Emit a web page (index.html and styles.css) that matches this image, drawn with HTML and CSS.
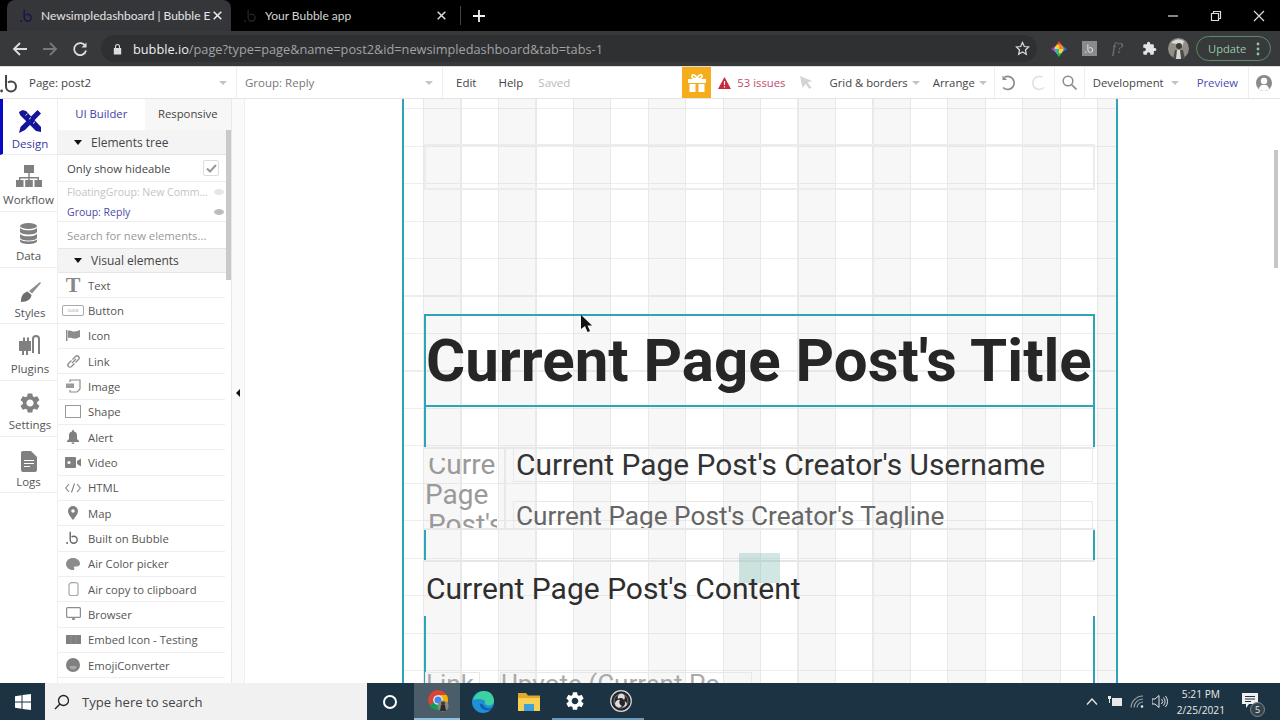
FILE: index.html
```html
<!DOCTYPE html>
<html>
<head>
  <meta charset="utf-8">
  <title>Newsimpledashboard | Bubble Editor</title>
  <link rel="stylesheet" href="styles.css">
</head>
<body>

<svg class="defs" width="0" height="0">
  <symbol id="gear" viewBox="0 0 24 24"><path d="M19.14 12.94c.04-.3.06-.61.06-.94 0-.32-.02-.64-.07-.94l2.03-1.58a.49.49 0 0 0 .12-.61l-1.92-3.32a.488.488 0 0 0-.59-.22l-2.39.96c-.5-.38-1.03-.7-1.62-.94l-.36-2.54a.484.484 0 0 0-.48-.41h-3.84c-.24 0-.43.17-.47.41l-.36 2.54c-.59.24-1.13.57-1.62.94l-2.39-.96c-.22-.08-.47 0-.59.22L2.74 8.87c-.12.21-.08.47.12.61l2.03 1.58c-.05.3-.09.63-.09.94s.02.64.07.94l-2.03 1.58a.49.49 0 0 0-.12.61l1.92 3.32c.12.22.37.29.59.22l2.39-.96c.5.38 1.03.7 1.62.94l.36 2.54c.05.24.24.41.48.41h3.84c.24 0 .44-.17.47-.41l.36-2.54c.59-.24 1.13-.56 1.62-.94l2.39.96c.22.08.47 0 .59-.22l1.92-3.32c.12-.22.07-.47-.12-.61l-2.01-1.58zM12 15.6c-1.98 0-3.6-1.62-3.6-3.6s1.62-3.6 3.6-3.6 3.6 1.62 3.6 3.6-1.62 3.6-3.6 3.6z"/></symbol>
  <symbol id="blogo" viewBox="0 0 20 20"><path d="M6 1v11.5a5 5 0 1 0 5-5 5 5 0 0 0-3 1" fill="none" stroke="currentColor" stroke-width="2"/><circle cx="1.6" cy="17" r="1.4" fill="currentColor"/></symbol>
</svg>

<div class="tabstrip">
  <div class="tab tab-active">
    <svg class="favicon" width="14" height="16" viewBox="0 0 20 20" color="#15154a"><use href="#blogo"/></svg>
    <span class="tab-title">Newsimpledashboard | Bubble E</span>
    <svg class="tab-close" width="9" height="9" viewBox="0 0 9 9"><path d="M.7.7l7.600 7.600M8.300.7L.7 8.300" stroke="#eee" stroke-width="1.500"/></svg>
  </div>
  <div class="tab">
    <svg class="favicon" width="14" height="16" viewBox="0 0 20 20" color="#222"><use href="#blogo"/></svg>
    <span class="tab-title">Your Bubble app</span>
    <svg class="tab-close" width="9" height="9" viewBox="0 0 9 9"><path d="M.7.7l7.600 7.600M8.300.7L.7 8.300" stroke="#ddd" stroke-width="1.500"/></svg>
  </div>
  <span class="tab-sep"></span>
  <svg class="new-tab" width="12" height="12" viewBox="0 0 12 12"><path d="M6 0v12M0 6h12" stroke="#f2f2f2" stroke-width="1.8"/></svg>
  <div class="window-btns">
    <svg width="12" height="12" viewBox="0 0 12 12"><path d="M1 6h10" stroke="#ddd" stroke-width="1.2"/></svg>
    <svg width="12" height="12" viewBox="0 0 12 12"><path d="M1.500 3.500h7v7h-7zM3.500 3.500v-2h7v7h-2" fill="none" stroke="#ddd" stroke-width="1.2"/></svg>
    <svg width="12" height="12" viewBox="0 0 12 12"><path d="M1 1l10 10M11 1L1 11" stroke="#ddd" stroke-width="1.2"/></svg>
  </div>
</div>

<div class="toolbar">
  <svg class="nav-btn" width="16" height="16" viewBox="0 0 16 16"><path d="M15 8H2M8 2L2 8l6 6" fill="none" stroke="#ddd" stroke-width="1.8"/></svg>
  <svg class="nav-btn" width="16" height="16" viewBox="0 0 16 16"><path d="M1 8h13M8 2l6 6-6 6" fill="none" stroke="#77787a" stroke-width="1.8"/></svg>
  <svg class="nav-btn" width="16" height="16" viewBox="0 0 16 16"><path d="M13.400 5.200A6 6 0 1 0 14 9.500" fill="none" stroke="#ddd" stroke-width="1.8"/><path d="M14.500 1.500v5h-5z" fill="#ddd"/></svg>
  <div class="omnibox">
    <svg width="9" height="12" viewBox="0 0 9 12"><path d="M2 5V3.400a2.500 2.500 0 0 1 5 0V5h1.200v6.500H.8V5zM3 5h3V3.400a1.500 1.500 0 0 0-3 0z" fill="#ddd"/></svg>
    <span class="url"><b>bubble.io</b>/page?type=page&amp;name=post2&amp;id=newsimpledashboard&amp;tab=tabs-1</span>
    <svg class="star" width="15" height="15" viewBox="0 0 24 24"><path d="M12 2.500l2.900 6.300 6.900.8-5.100 4.700 1.400 6.800-6.100-3.400-6.100 3.400 1.400-6.800-5.100-4.700 6.900-.8z" fill="none" stroke="#ddd" stroke-width="2"/></svg>
  </div>
  <div class="extensions">
    <svg width="16" height="16" viewBox="0 0 16 16"><path d="M8 0l3 4H5z" fill="#e8382f"/><path d="M16 8l-4 3V5z" fill="#2d6de0"/><path d="M8 16l-3-4h6z" fill="#22b14c"/><path d="M0 8l4-3v6z" fill="#a033d0"/><circle cx="8" cy="8" r="4.500" fill="#f6d52c"/><path d="M8 3.500a4.500 4.500 0 0 1 4.500 4.500H8z" fill="#f08a24"/><path d="M8 8v4.500A4.500 4.500 0 0 1 3.500 8z" fill="#21b5c7"/></svg>
    <svg width="15" height="15" viewBox="0 0 15 15" color="#e6e6e6"><rect width="15" height="15" fill="#8b8b8b"/><g transform="translate(3 3) scale(.48)"><use href="#blogo" width="20" height="20"/></g></svg>
    <span class="ext-fx">f?</span>
    <svg width="15" height="15" viewBox="0 0 24 24"><path d="M20.500 11H19V7a2 2 0 0 0-2-2h-4V3.500a2.500 2.500 0 0 0-5 0V5H4a2 2 0 0 0-2 2v3.800h1.500a2.700 2.700 0 0 1 0 5.400H2V20a2 2 0 0 0 2 2h3.800v-1.500a2.700 2.700 0 0 1 5.400 0V22H17a2 2 0 0 0 2-2v-4h1.500a2.500 2.500 0 0 0 0-5z" fill="#e4e4e4"/></svg>
    <svg class="ext-avatar" width="21" height="21" viewBox="0 0 21 21"><circle cx="10.500" cy="10.500" r="10.500" fill="#8f8f88"/><path d="M3 5a10 10 0 0 1 13-2l-2 6-5-3z" fill="#dcdcd5"/><circle cx="11" cy="8" r="3" fill="#3f3a36"/><path d="M5 21l2-9h8l2 9z" fill="#4d4a46"/><path d="M9 12h3l1 9H8z" fill="#d8d8d2"/></svg>
  </div>
  <div class="update-pill">
    <span>Update</span>
    <svg width="4" height="14" viewBox="0 0 4 14"><circle cx="2" cy="2" r="1.400" fill="#8ec9a5"/><circle cx="2" cy="7" r="1.400" fill="#8ec9a5"/><circle cx="2" cy="12" r="1.400" fill="#8ec9a5"/></svg>
  </div>
</div>

<div class="appbar">
  <svg class="app-logo" width="20" height="20" viewBox="0 0 20 20" color="#444"><use href="#blogo"/></svg>
  <div class="picker picker-page"><span>Page: post2</span><i class="caret"></i></div>
  <div class="picker picker-group"><span class="muted">Group: Reply</span><i class="caret"></i></div>
  <span class="menu menu-edit">Edit</span>
  <span class="menu menu-help">Help</span>
  <span class="menu saved">Saved</span>
  <div class="appbar-right">
    <div class="gift">
      <svg width="20" height="20" viewBox="0 0 20 20"><path d="M1 6h18v4H1zM2.500 11h6v8h-6zM11.500 11h6v8h-6z" fill="#fff"/><path d="M10 6C7 6 4.500 5 5 2.800S9 2 10 6c1-4 4.500-5.400 5-3.200S13 6 10 6z" fill="none" stroke="#fff" stroke-width="1.700"/></svg>
    </div>
    <div class="issues">
      <svg width="13" height="12" viewBox="0 0 13 12"><path d="M6.500 0L13 12H0z" fill="#c9283e"/><path d="M6.500 4v4M6.500 9.200v1.300" stroke="#fff" stroke-width="1.200"/></svg>
      <span>53 issues</span>
    </div>
    <svg class="pointer-tool" width="14" height="15" viewBox="0 0 14 15"><path d="M1 1l12 5-4.500 1.500 4 5-2 1.500-4-5L3.500 13z" fill="#d4d4d4"/></svg>
    <span class="menu menu-grid">Grid &amp; borders</span><i class="caret caret-grid"></i>
    <span class="menu menu-arrange">Arrange</span><i class="caret caret-arrange"></i>
    <div class="bar-icon bar-undo">
      <svg width="16" height="16" viewBox="0 0 16 16"><path d="M4.500 2.300A6.500 6.500 0 1 1 3 12.500" fill="none" stroke="#8b8b8b" stroke-width="1.700"/><path d="M2.500 .5v4.500H7z" fill="#8b8b8b"/></svg>
    </div>
    <div class="bar-icon bar-redo">
      <svg width="16" height="16" viewBox="0 0 16 16"><path d="M11.500 2.300A6.500 6.500 0 1 0 13 12.500" fill="none" stroke="#e2e2e2" stroke-width="1.700"/></svg>
    </div>
    <div class="bar-icon bar-search">
      <svg width="15" height="15" viewBox="0 0 15 15"><circle cx="6" cy="6" r="4.800" fill="none" stroke="#8b8b8b" stroke-width="1.500"/><path d="M9.500 9.500L14.500 14.500" stroke="#8b8b8b" stroke-width="1.700"/></svg>
    </div>
    <span class="menu menu-dev">Development</span><i class="caret caret-dev"></i>
    <span class="menu preview">Preview</span>
    <div class="bar-user">
      <svg width="16" height="16" viewBox="0 0 16 16"><circle cx="8" cy="8" r="8" fill="#8a8a8a"/><circle cx="8" cy="6" r="3.200" fill="#fff"/><path d="M2.800 14a5.300 5.300 0 0 1 10.400 0 8 8 0 0 1-10.400 0z" fill="#fff"/></svg>
    </div>
  </div>
</div>

<div class="workspace">
  <nav class="rail">
    <div class="rail-item rail-active">
      <svg width="22" height="23" viewBox="0 0 22 23"><path d="M3.500 0L7 1l15 16 0 5-5-1L1 5 0 2z" fill="#14149a"/><path d="M18.500 0L22 3.500 6 20l-6 3 1.500-6z" fill="#14149a"/><path d="M6.500 5.500L8.500 3.800M10 9.200L12 7.500M14 13.500L16 11.800" stroke="#fff" stroke-width=".9"/></svg>
      <span>Design</span>
    </div>
    <div class="rail-item">
      <svg width="26" height="22" viewBox="0 0 26 22"><path d="M8 0h10v8H8zM12.300 8h1.400v4h9.300v3h-1.400v-1.600h-7.900V15h-1.400v-1.600H4.400V15H3v-3h9.300z" fill="#808080"/><path d="M0 15h7.500v7H0zM9.200 15h7.600v7H9.200zM18.500 15H26v7h-7.500z" fill="#808080"/></svg>
      <span>Workflow</span>
    </div>
    <div class="rail-item rail-gap-data">
      <svg width="17" height="21" viewBox="0 0 17 21"><ellipse cx="8.500" cy="3" rx="8.500" ry="3" fill="#808080"/><path d="M0 5c1.500 1.500 4.500 2.300 8.500 2.300S15.500 6.500 17 5v3.500c0 1.700-3.800 3-8.500 3S0 10.200 0 8.500zM0 11c1.500 1.500 4.500 2.300 8.500 2.300S15.500 12.500 17 11v3.500c0 1.700-3.800 3-8.500 3S0 16.200 0 14.500z" fill="#808080"/><path d="M0 16.500c1.500 1.200 4.500 2 8.500 2s7-.8 8.500-2V18c0 1.700-3.800 3-8.500 3S0 19.700 0 18z" fill="#808080"/></svg>
      <span>Data</span>
    </div>
    <div class="rail-item rail-shift rail-gap-styles">
      <svg width="22" height="22" viewBox="0 0 22 22"><path d="M21 0l1 1-9 10.500-3-2.500z" fill="#8e8e8e"/><path d="M8.500 9.500l4 3.500c-.5 4-4 7-10.500 7C2 18 2 16 3 14s3-4 5.500-4.500z" fill="#6e6e6e"/></svg>
      <span>Styles</span>
    </div>
    <div class="rail-item rail-shift">
      <svg width="23" height="22" viewBox="0 0 23 22"><path d="M0 7h4V3.500h2V7h2V3.500h2V7h2v10H9v4H7v-4H5v4H3v-4H0z" fill="#808080"/><path d="M14 19V5a3 3 0 0 1 6 0v15" fill="none" stroke="#808080" stroke-width="2"/></svg>
      <span>Plugins</span>
    </div>
    <div class="rail-item rail-shift rail-gap-settings">
      <svg width="24" height="24" viewBox="0 0 24 24" fill="#808080"><use href="#gear"/></svg>
      <span>Settings</span>
    </div>
    <div class="rail-item rail-gap-logs">
      <svg width="16" height="21" viewBox="0 0 16 21"><path d="M0 2a2 2 0 0 1 2-2h8l6 6v13a2 2 0 0 1-2 2H2a2 2 0 0 1-2-2z" fill="#808080"/><path d="M3 9.500h10M3 12.500h10M3 15.500h6" stroke="#fff" stroke-width="1.200"/></svg>
      <span>Logs</span>
    </div>
  </nav>

  <aside class="palette">
    <div class="palette-tabs">
      <span class="palette-tab palette-tab-on">UI Builder</span>
      <span class="palette-tab">Responsive</span>
    </div>
    <div class="section-head"><i class="down"></i>Elements tree</div>
    <div class="hideable">
      <span>Only show hideable</span>
      <span class="check"><svg width="11" height="9" viewBox="0 0 11 9"><path d="M1 4.500L4 7.500 10 1" fill="none" stroke="#999" stroke-width="2"/></svg></span>
    </div>
    <div class="tree-rows">
      <div class="tree-row tree-faded"><span>FloatingGroup: New Comm...</span><i class="eye eye-faded"></i></div>
      <div class="tree-row tree-link"><span>Group: Reply</span><i class="eye"></i></div>
    </div>
    <div class="search-row">Search for new elements...</div>
    <div class="section-head section-visual"><i class="down"></i>Visual elements</div>
    <div class="el-row"><span class="el-icon el-t">T</span>Text</div>
    <div class="el-row"><span class="el-icon"><span class="click-btn">CLICK</span></span>Button</div>
    <div class="el-row"><span class="el-icon"><svg width="14" height="11" viewBox="0 0 14 11"><path d="M0 0h1.500v11H0zM2 1c3-1.500 4 1 6.500 .5S12 1 14 0v7c-2 1-3.500 1.700-5.500 1.500S5 7 2 8z" fill="#8c8c8c"/></svg></span>Icon</div>
    <div class="el-row"><span class="el-icon"><svg width="15" height="15" viewBox="0 0 15 15"><path d="M6 9l4-4M5.500 6.500L2.500 9.500a2.100 2.100 0 0 0 3 3l3-3M6.500 5.500l3-3a2.100 2.100 0 0 1 3 3l-3 3" fill="none" stroke="#8c8c8c" stroke-width="1.300"/></svg></span>Link</div>
    <div class="el-row"><span class="el-icon"><svg width="15" height="14" viewBox="0 0 15 14"><path d="M4 3V1h10v9l-3 3H4v-2" fill="none" stroke="#8c8c8c" stroke-width="1.200"/><rect y="4.500" width="8" height="4.500" fill="#9a9a9a"/></svg></span>Image</div>
    <div class="el-row"><span class="el-icon"><span class="shape-box"></span></span>Shape</div>
    <div class="el-row"><span class="el-icon"><svg width="12" height="14" viewBox="0 0 12 14"><path d="M6 0a1 1 0 0 1 1 1v.6A4 4 0 0 1 10 5.500V9l2 2v1H0v-1l2-2V5.500A4 4 0 0 1 5 1.600V1a1 1 0 0 1 1-1zM4.500 12.500h3a1.500 1.500 0 0 1-3 0z" fill="#808080"/></svg></span>Alert</div>
    <div class="el-row"><span class="el-icon"><svg width="16" height="11" viewBox="0 0 16 11"><path d="M0 1a1 1 0 0 1 1-1h9a1 1 0 0 1 1 1v9a1 1 0 0 1-1 1H1a1 1 0 0 1-1-1z" fill="#808080"/><circle cx="4" cy="5.500" r="1.600" fill="#fff"/><path d="M12 4l4-2.500v8L12 7z" fill="#808080"/></svg></span>Video</div>
    <div class="el-row"><span class="el-icon"><svg width="16" height="10" viewBox="0 0 16 10"><path d="M4 1L.7 5 4 9M12 1l3.300 4L12 9M9.500 .5l-3 9" fill="none" stroke="#808080" stroke-width="1.100"/></svg></span>HTML</div>
    <div class="el-row"><span class="el-icon"><svg width="10" height="14" viewBox="0 0 10 14"><path d="M5 0a5 5 0 0 1 5 5c0 3.500-5 9-5 9S0 8.500 0 5a5 5 0 0 1 5-5zm0 3.200a1.800 1.800 0 1 0 0 3.600 1.800 1.800 0 0 0 0-3.600z" fill="#808080"/></svg></span>Map</div>
    <div class="el-row"><span class="el-icon"><svg width="14" height="14" viewBox="0 0 20 20" color="#666"><use href="#blogo"/></svg></span>Built on Bubble</div>
    <div class="el-row"><span class="el-icon"><svg width="14" height="12" viewBox="0 0 14 12"><path d="M7 0c4 0 7 2.500 7 5.500 0 2-1.500 3-3.500 3H9c-1 0-1.300 1-.8 1.700.5.800 0 1.800-1.200 1.800-4 0-7-2.700-7-6s3-6 7-6z" fill="#8c8c8c"/></svg></span>Air Color picker</div>
    <div class="el-row"><span class="el-icon"><svg width="11" height="14" viewBox="0 0 11 14"><path d="M3 .6h5a2 2 0 0 1 2 2v9a2 2 0 0 1-2 2H3a2 2 0 0 1-2-2V2.600z" fill="none" stroke="#a8a8a8" stroke-width="1.200"/></svg></span>Air copy to clipboard</div>
    <div class="el-row"><span class="el-icon"><svg width="15" height="14" viewBox="0 0 15 14"><rect x=".6" y=".6" width="13.800" height="9.800" rx="1" fill="none" stroke="#8c8c8c" stroke-width="1.200"/><path d="M6 13h3l-.5-2.500h-2z" fill="#8c8c8c"/></svg></span>Browser</div>
    <div class="el-row"><span class="el-icon"><svg width="15" height="9" viewBox="0 0 15 9"><rect width="15" height="9" fill="#808080"/><path d="M5 0v9M10 0v9" stroke="#999" stroke-width=".6"/></svg></span>Embed Icon - Testing</div>
    <div class="el-row"><span class="el-icon"><svg width="14" height="14" viewBox="0 0 14 14"><circle cx="7" cy="7" r="7" fill="#808080"/><path d="M3.500 8a3.500 3.500 0 0 0 7 0z" fill="#a8a8a8"/></svg></span>EmojiConverter</div>
    <div class="palette-scroll"></div>
  </aside>

  <div class="collapse-strip"><i class="collapse-arrow"></i></div>

  <main class="canvas">
    <div class="page-frame">
      <div class="grid-cols"></div>

      <div class="box-top"></div>

      <div class="box-title">Current Page Post's Title</div>

      <i class="edge edge-l edge-a"></i>
      <i class="edge edge-r edge-a"></i>

      <div class="box-row">
        <div class="avatar-cell">
          <div class="avatar-text">
            <div class="avatar-line avatar-first">Current</div>
            <div class="avatar-line avatar-page">Page</div>
            <div class="avatar-line">Post's</div>
          </div>
        </div>
        <div class="creator-name">Current Page Post's Creator's Username</div>
        <div class="creator-tag">Current Page Post's Creator's Tagline</div>
      </div>

      <i class="edge edge-l edge-b"></i>
      <i class="edge edge-r edge-b"></i>

      <div class="box-gap"></div>
      <div class="teal-chip"></div>
      <div class="post-content">Current Page Post's Content</div>

      <i class="edge edge-l edge-c"></i>
      <i class="edge edge-r edge-c"></i>

      <div class="footer-btn footer-link">Link</div>
      <div class="footer-btn footer-upvote">Upvote (Current Po</div>
    </div>

    <svg class="mouse" width="13" height="17" viewBox="0 0 13 17"><path d="M1 0l11 10.500H7.500L10 16l-2.500 1-2.500-6L1 14z" fill="#111"/></svg>
    <div class="canvas-scroll"></div>
  </main>
</div>

<footer class="taskbar">
  <div class="start">
    <svg width="16" height="16" viewBox="0 0 16 16"><path d="M0 2.300l6.500-1v6.200H0zM7.500 1.100L16 0v7.500H7.500zM0 8.500h6.500v6.200l-6.500-1zM7.500 8.500H16V16l-8.500-1.100z" fill="#fff"/></svg>
  </div>
  <div class="search-box">
    <svg width="16" height="16" viewBox="0 0 16 16"><circle cx="9.500" cy="6.500" r="5" fill="none" stroke="#222" stroke-width="1.300"/><path d="M6 10L1 15" stroke="#222" stroke-width="1.500"/></svg>
    <span>Type here to search</span>
  </div>
  <div class="task-icon"><span class="cortana"></span></div>
  <div class="task-icon task-chrome">
    <svg width="22" height="22" viewBox="0 0 22 22"><circle cx="10" cy="10" r="10" fill="#db4437"/><path d="M10 10L1.300 15A10 10 0 0 0 13 19.500z" fill="#0f9d58"/><path d="M10 5h8.700A10 10 0 0 1 13 19.500L10 10z" fill="#f4b400"/><circle cx="10" cy="10" r="4.200" fill="#4285f4" stroke="#eee" stroke-width="1.300"/><circle cx="15" cy="16" r="5.500" fill="#8a8a84"/><path d="M12 21l1-6h4l1 6z" fill="#2d2b28"/><circle cx="15" cy="13.500" r="2" fill="#3f3a36"/></svg>
  </div>
  <div class="task-icon">
    <svg width="22" height="22" viewBox="0 0 22 22"><circle cx="11" cy="11" r="11" fill="#1f8fd6"/><path d="M1 9C3 3 8 0 12 0c6 0 10 4 10 10 0 3-2.500 4.500-5 4.500S12 13 13 10c-2-2-7-3-12-1z" fill="#3bd1a0"/><path d="M8 13c0 4 4 7 9 6 2-.4 3-1.200 4-3-3 2-7 2-9-1-1-1.500-3-3-4-2z" fill="#0f5fae"/></svg>
  </div>
  <div class="task-icon">
    <svg width="22" height="19" viewBox="0 0 22 19"><path d="M0 1h8l2 2.500h12V7H0z" fill="#e3a82a"/><path d="M0 6h22v13H0z" fill="#f6cf55"/><path d="M6 12h10v7H6z" fill="#3f9fd8"/></svg>
  </div>
  <div class="task-icon task-underlined">
    <svg width="22" height="22" viewBox="0 0 24 24" fill="#fff"><use href="#gear"/></svg>
  </div>
  <div class="task-icon task-underlined">
    <svg width="22" height="22" viewBox="0 0 22 22"><circle cx="11" cy="11" r="10.300" fill="#26262a" stroke="#d8d8d8" stroke-width="1.200"/><circle cx="11" cy="11" r="7" fill="none" stroke="#777" stroke-width="1"/><path d="M11 3.500a4 4 0 0 1 3 6.500 4 4 0 0 0-6-1 4 4 0 0 1 3-5.500zM5 14a4 4 0 0 1 5-4 4 4 0 0 0 2 6 4 4 0 0 1-7-2zM17 14a4 4 0 0 1-5 3 4 4 0 0 0 2.500-6A4 4 0 0 1 17 14z" fill="#dcdcdc"/></svg>
  </div>
  <div class="tray">
    <svg width="12" height="7" viewBox="0 0 12 7"><path d="M1 6.500L6 1l5 5.500" fill="none" stroke="#e8e8e8" stroke-width="1.300"/></svg>
    <svg class="tray-battery" width="15" height="11" viewBox="0 0 15 11"><rect x="4" y="2" width="10" height="8" fill="#e8e8e8"/><path d="M0 0h3v3H0zM1 3h1v4H1z" fill="#e8e8e8"/></svg>
    <svg width="15" height="13" viewBox="0 0 15 13"><path d="M1 12.500a12 12 0 0 1 12-11.500M4 12.500a9 9 0 0 1 9-8.500M7 12.500a6 6 0 0 1 6-5.500" fill="none" stroke="#9aa5ab" stroke-width="1.100"/><circle cx="12" cy="11.500" r="1.300" fill="#e8e8e8"/></svg>
    <svg width="16" height="13" viewBox="0 0 16 13"><path d="M0 4h3l4-3.500v12L3 9H0z" fill="none" stroke="#e8e8e8" stroke-width="1"/><path d="M9.500 4a3.500 3.500 0 0 1 0 5M11.500 2.500a6 6 0 0 1 0 8M13.500 1a8.500 8.500 0 0 1 0 11" fill="none" stroke="#e8e8e8" stroke-width="1"/></svg>
    <div class="clock"><span>5:21 PM</span><span>2/25/2021</span></div>
    <div class="notify">
      <svg width="16" height="15" viewBox="0 0 16 15"><path d="M0 0h16v11H7l-3 4v-4H0z" fill="#f0f0f0"/><path d="M3 3.500h10M3 6h10M3 8.500h6" stroke="#1b3342" stroke-width="1"/></svg>
      <span class="notify-count">5</span>
    </div>
  </div>
</footer>

</body>
</html>
```

FILE: styles.css
```css
* {
  box-sizing: border-box;
}

html, body {
  margin: 0;
  height: 720px;
  overflow: hidden;
}

body {
  display: flex;
  flex-direction: column;
  width: 1280px;
  font-family: "Open Sans", sans-serif;
  color: #444;
  background: #fff;
}

.defs {
  position: absolute;
}

i {
  display: block;
  font-style: normal;
}

/* browser tabs */
.tabstrip {
  display: flex;
  align-items: flex-end;
  flex: 0 0 31px;
  height: 31px;
  padding-left: 7px;
  background: #000;
}

.tab {
  display: flex;
  align-items: center;
  width: 224px;
  height: 31px;
  padding: 0 9px 0 13px;
  font-family: Lato, sans-serif;
  font-size: 12px;
  color: #d6d6d6;
}

.tab-active {
  background: #35363a;
  border-radius: 8px 8px 0 0;
  color: #e4e4e4;
}

.favicon {
  flex: none;
  margin-right: 7px;
}

.tab-title {
  flex: 1;
  white-space: nowrap;
}

.tab-close {
  flex: none;
}

.tab-sep {
  align-self: center;
  width: 1px;
  height: 19px;
  margin-left: 5px;
  background: #444;
}

.new-tab {
  align-self: center;
  margin-left: 12px;
}

.window-btns {
  display: flex;
  align-self: center;
  gap: 31px;
  margin-left: auto;
  padding-right: 15px;
}

/* address bar */
.toolbar {
  display: flex;
  align-items: center;
  flex: 0 0 35px;
  height: 35px;
  padding-left: 12px;
  background: #38393b;
}

.nav-btn {
  margin-right: 14px;
}

.omnibox {
  display: flex;
  align-items: center;
  width: 936px;
  height: 27px;
  margin-left: -1px;
  padding: 0 9px 0 12px;
  border-radius: 14px;
  background: #2f3032;
}

.url {
  margin-left: 11px;
  font-size: 12.75px;
  color: #a2a3a5;
  white-space: nowrap;
}

.url b {
  font-weight: 400;
  color: #eee;
}

.star {
  margin-left: auto;
  margin-right: -2px;
}

.extensions {
  display: flex;
  align-items: center;
  gap: 15px;
  margin-left: 14px;
}

.ext-fx {
  width: 15px;
  font-family: "Liberation Serif", serif;
  font-style: italic;
  font-size: 14px;
  color: #777;
}

.ext-avatar {
  margin-left: -4px;
}

.update-pill {
  display: flex;
  align-items: center;
  justify-content: space-between;
  width: 75px;
  height: 25px;
  margin-left: 7px;
  padding: 0 10px 0 11px;
  border: 1px solid #5b8a6c;
  border-radius: 13px;
  font-size: 11.2px;
  color: #8ec9a5;
}

/* bubble top bar */
.appbar {
  display: flex;
  align-items: center;
  flex: 0 0 33px;
  height: 33px;
  border-top: 1px solid #ddd;
  border-bottom: 1px solid #e4e4e4;
  font-size: 11.5px;
  background: #fff;
}

.app-logo {
  flex: none;
  margin: 2px 9px 0 0;
}

.picker {
  display: flex;
  align-items: center;
  justify-content: space-between;
  height: 100%;
  padding-right: 9px;
  border-right: 1px solid #eee;
}

.picker-page {
  width: 208px;
}

.picker-group {
  width: 206px;
  padding-left: 8px;
}

.muted {
  color: #777;
}

.caret {
  width: 0;
  height: 0;
  border-left: 4px solid transparent;
  border-right: 4px solid transparent;
  border-top: 4px solid #c4c4c4;
}

.menu {
  white-space: nowrap;
  color: #444;
}

.menu-edit {
  margin-left: 13px;
}

.menu-help {
  margin-left: 22px;
}

.saved {
  margin-left: 15px;
  color: #bbb;
}

.appbar-right {
  display: flex;
  align-items: center;
  height: 100%;
  margin-left: auto;
  font-size: 11.3px;
}

.gift {
  display: flex;
  align-items: center;
  justify-content: center;
  width: 29px;
  height: 100%;
  background: #f5ad1c;
}

.issues {
  display: flex;
  align-items: center;
  gap: 6px;
  margin-left: 7px;
  color: #c9486a;
}

.pointer-tool {
  margin-left: 14px;
}

.menu-grid {
  margin-left: 16px;
}

.caret-grid {
  margin-left: 4px;
}

.menu-arrange {
  margin-left: 13px;
}

.caret-arrange {
  margin-left: 4px;
}

.bar-icon {
  display: flex;
  align-items: center;
  justify-content: center;
  height: 100%;
}

.bar-undo {
  width: 31px;
  margin-left: 7px;
  padding-right: 3px;
  border-left: 1px solid #eee;
}

.bar-redo {
  width: 29px;
}

.bar-search {
  width: 31px;
  border-left: 1px solid #eee;
  border-right: 1px solid #eee;
}

.menu-dev {
  margin-left: 8px;
}

.caret-dev {
  margin-left: 7px;
}

.preview {
  margin-left: 18px;
  color: #4a4ab4;
}

.bar-user {
  display: flex;
  align-items: center;
  justify-content: center;
  width: 32px;
  height: 100%;
  margin-left: 10px;
  padding-right: 2px;
  border-left: 1px solid #eee;
}

/* editor */
.workspace {
  display: flex;
  flex: 0 0 584px;
  height: 584px;
  overflow: hidden;
}

.rail {
  display: grid;
  grid-auto-rows: 56.33px;
  flex: 0 0 57px;
  align-content: start;
}

.rail-item {
  display: flex;
  flex-direction: column;
  align-items: center;
  justify-content: flex-end;
  gap: 5px;
  padding-bottom: 3.5px;
  border-bottom: 1px solid #eee;
  font-size: 11.5px;
  color: #555;
}

.rail-active {
  gap: 3px;
  border-left: 3px solid #0a0ac4;
  color: #3a3a9c;
}

.rail-shift {
  padding-left: 3px;
}

.rail-gap-data {
  gap: 4px;
}

.rail-gap-styles {
  gap: 1px;
}

.rail-gap-settings {
  gap: 2px;
}

.rail-gap-logs {
  gap: 2px;
}

.palette {
  position: relative;
  flex: 0 0 174px;
  overflow: hidden;
  border-left: 1px solid #eee;
  font-size: 11.3px;
}

.palette-tabs {
  display: flex;
  height: 31px;
}

.palette-tab {
  flex: 1;
  padding-top: 7px;
  text-align: center;
  background: #f7f7f7;
  color: #444;
}

.palette-tab-on {
  background: #fff;
  color: #3d3da8;
}

.section-head {
  display: flex;
  align-items: center;
  height: 25px;
  padding-left: 16px;
  border-bottom: 1px solid #e6e6e6;
  font-size: 12px;
  background: #f4f4f4;
  color: #444;
}

.down {
  width: 0;
  height: 0;
  margin-right: 9px;
  border-left: 4px solid transparent;
  border-right: 4px solid transparent;
  border-top: 5px solid #111;
}

.hideable {
  display: flex;
  align-items: center;
  justify-content: space-between;
  height: 27px;
  padding: 0 12px 0 9px;
  border-bottom: 1px solid #eee;
}

.check {
  display: flex;
  align-items: center;
  justify-content: center;
  width: 16px;
  height: 16px;
  border: 1px solid #ddd;
  border-radius: 2px;
}

.tree-rows {
  height: 40px;
  border-bottom: 1px solid #eee;
}

.tree-row {
  display: flex;
  align-items: center;
  justify-content: space-between;
  height: 20px;
  padding: 0 7px 0 9px;
  font-size: 10.5px;
}

.tree-faded {
  color: #c4c4c4;
}

.tree-link {
  color: #4a4aa8;
}

.eye {
  width: 10px;
  height: 6px;
  border-radius: 50%;
  background: #bbb;
}

.eye-faded {
  background: #e6e6e6;
}

.search-row {
  display: flex;
  align-items: center;
  height: 26px;
  padding-left: 9px;
  color: #999;
}

.section-visual {
  border-top: 1px solid #e6e6e6;
}

.el-row {
  display: flex;
  align-items: center;
  height: 25.33px;
  margin-right: 6px;
  border-bottom: 1px solid #eee;
  color: #555;
}

.el-icon {
  display: flex;
  align-items: center;
  justify-content: center;
  flex: 0 0 30px;
  width: 30px;
}

.el-t {
  font-family: "Liberation Serif", serif;
  font-size: 22px;
  font-weight: 700;
  color: #888;
}

.click-btn {
  width: 22px;
  height: 11px;
  border: 1px solid #aaa;
  border-radius: 2px;
  font-size: 4px;
  line-height: 9px;
  text-align: center;
  color: #888;
}

.shape-box {
  width: 16px;
  height: 13px;
  border: 1px solid #999;
}

.palette-scroll {
  position: absolute;
  top: 31px;
  right: 0;
  width: 5px;
  height: 150px;
  background: #c9c9c9;
}

.collapse-strip {
  display: flex;
  align-items: center;
  justify-content: center;
  flex: 0 0 14px;
  padding-top: 4px;
  border-left: 1px solid #e8e8e8;
  border-right: 1px solid #eee;
  background: #fafafa;
}

.collapse-arrow {
  width: 0;
  height: 0;
  border-top: 4px solid transparent;
  border-bottom: 4px solid transparent;
  border-right: 4px solid #111;
}

/* canvas: everything in here sits on the editor's free canvas */
.canvas {
  position: relative;
  flex: 1;
  overflow: hidden;
  background: #fff;
}

.page-frame {
  position: absolute;
  top: 0;
  left: 157px;
  width: 716px;
  height: 584px;
  border-left: 2px solid #2fa3b8;
  border-right: 2px solid #2fa3b8;
  background-color: #fff;
  background-image: repeating-linear-gradient(to bottom, transparent 0, transparent 9.2px, #eeeeee 9.2px, #eeeeee 10.4px, transparent 10.4px, transparent 37.45px);
}

.grid-cols {
  position: absolute;
  top: 0;
  bottom: 0;
  left: 19px;
  right: 0;
  background-image:
    repeating-linear-gradient(to right, #e9e9e9 0, #e9e9e9 1.2px, transparent 1.2px, transparent 37.45px),
    repeating-linear-gradient(to right, rgba(0, 0, 10, .03) 0, rgba(0, 0, 10, .03) 37.45px, transparent 37.45px, transparent 74.9px);
}

.box-top {
  position: absolute;
  top: 45px;
  left: 20px;
  width: 671px;
  height: 46px;
  border: 2px solid #ececec;
}

.box-title {
  position: absolute;
  top: 215px;
  left: 20px;
  width: 671px;
  height: 93px;
  border: 2px solid #2fa3b8;
  font-family: Roboto, sans-serif;
  font-size: 60px;
  font-weight: 700;
  line-height: 89px;
  white-space: nowrap;
  color: #262626;
}

.edge {
  position: absolute;
  width: 2px;
  background: #2fa3b8;
}

.edge-l {
  left: 20px;
}

.edge-r {
  left: 689px;
}

.edge-a {
  top: 308px;
  height: 40px;
}

.edge-b {
  top: 431px;
  height: 30px;
}

.edge-c {
  top: 517px;
  height: 70px;
}

.box-row {
  position: absolute;
  top: 348px;
  left: 20px;
  width: 671px;
  height: 83px;
  border-top: 2px solid #e8e8e8;
  border-bottom: 2px solid #e8e8e8;
  font-family: Roboto, sans-serif;
}

.avatar-cell {
  position: absolute;
  top: 0;
  left: 1px;
  width: 81px;
  height: 79px;
  border-right: 2px solid #e8e8e8;
}

.avatar-text {
  width: 72px;
  height: 70px;
  margin-top: 9px;
  overflow: hidden;
  font-size: 28px;
  line-height: 30px;
  white-space: nowrap;
  color: #9a9a9a;
}

.avatar-line {
  padding-left: 3px;
}

.avatar-first {
  margin-top: -8px;
}

.avatar-page {
  padding-left: 0;
}

.creator-name {
  position: absolute;
  top: 0;
  left: 89px;
  width: 580px;
  height: 33px;
  border: 1px solid #e8e8e8;
  border-top: 0;
  padding-left: 2px;
  font-size: 29.9px;
  line-height: 31px;
  white-space: nowrap;
  color: #333;
}

.creator-tag {
  position: absolute;
  top: 52px;
  left: 89px;
  width: 580px;
  height: 27px;
  overflow: hidden;
  border: 1px solid #e8e8e8;
  border-bottom: 0;
  padding-left: 2px;
  font-size: 26.2px;
  line-height: 29px;
  white-space: nowrap;
  color: #666;
}

.box-gap {
  position: absolute;
  top: 461px;
  left: 20px;
  width: 671px;
  height: 56px;
  border-top: 2px solid #e6e6e6;
}

.teal-chip {
  position: absolute;
  top: 454px;
  left: 335px;
  width: 41px;
  height: 30px;
  background: rgba(120, 185, 175, .35);
}

.post-content {
  position: absolute;
  top: 471px;
  left: 22px;
  font-family: Roboto, sans-serif;
  font-size: 30px;
  line-height: 38px;
  white-space: nowrap;
  color: #2e2e2e;
}

.footer-btn {
  position: absolute;
  top: 573px;
  height: 30px;
  border: 1px solid #e8e8e8;
  font-family: Roboto, sans-serif;
  font-size: 26px;
  line-height: 22px;
  white-space: nowrap;
  color: #aaa;
}

.footer-link {
  left: 21px;
  width: 55px;
}

.footer-upvote {
  left: 96px;
  width: 252px;
}

.mouse {
  position: absolute;
  top: 216px;
  left: 335px;
}

.canvas-scroll {
  position: absolute;
  top: 51px;
  right: 2px;
  width: 4px;
  height: 118px;
  background: #c6c6c6;
}

/* windows taskbar */
.taskbar {
  position: relative;
  display: flex;
  align-items: center;
  flex: 0 0 37px;
  height: 37px;
  background: #1b3342;
  color: #e8e8e8;
}

.start {
  display: flex;
  align-items: center;
  justify-content: center;
  width: 45px;
  height: 100%;
}

.search-box {
  display: flex;
  align-items: center;
  gap: 12px;
  width: 322px;
  height: 100%;
  padding-left: 9px;
  font-size: 13.1px;
  color: #444;
  background: #f1f1f1;
}

.task-icon {
  display: flex;
  align-items: center;
  justify-content: center;
  flex: 0 0 46px;
  height: 100%;
}

.cortana {
  width: 14px;
  height: 14px;
  border: 2.5px solid #fff;
  border-radius: 50%;
}

.task-chrome {
  margin-left: 1px;
  padding-left: 4px;
  background: #4a5d68;
  border-bottom: 2px solid #8fc0e4;
}

.task-underlined {
  border-bottom: 2px solid #6d99bb;
}

.tray {
  display: flex;
  align-items: center;
  margin-left: auto;
  height: 100%;
  gap: 7px;
  padding-right: 22px;
}

.tray-battery {
  margin-left: 3px;
}

.clock {
  display: flex;
  flex-direction: column;
  align-items: center;
  margin-left: 2px;
  font-size: 10.2px;
  line-height: 16px;
}

.notify {
  position: relative;
  margin-left: 10px;
}

.notify-count {
  position: absolute;
  right: -7px;
  bottom: -4px;
  width: 15px;
  height: 15px;
  border-radius: 50%;
  font-size: 9px;
  line-height: 13px;
  text-align: center;
  background: #33444f;
  border: 1px solid #888;
}
```
